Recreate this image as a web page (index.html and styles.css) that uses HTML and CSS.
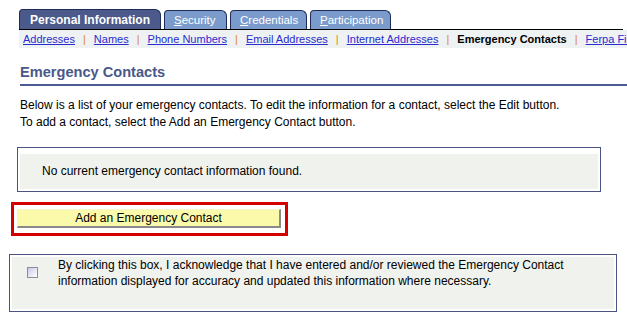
FILE: index.html
```html
<!DOCTYPE html>
<html>
<head>
<meta charset="utf-8">
<link rel="stylesheet" href="styles.css">
</head>
<body>
<div class="tabs">
  <div class="tab active">Personal Information</div>
  <div class="tab tab-security"><u>S</u>ecurity</div>
  <div class="tab tab-credentials"><u>C</u>redentials</div>
  <div class="tab tab-participation"><u>P</u>articipation</div>
</div>
<div class="subnav">
  <a href="#">Addresses</a><span class="sep">|</span><a href="#">Names</a><span class="sep">|</span><a href="#">Phone Numbers</a><span class="sep">|</span><a href="#">Email Addresses</a><span class="sep">|</span><a href="#">Internet Addresses</a><span class="sep">|</span><span class="current">Emergency Contacts</span><span class="sep">|</span><a href="#">Ferpa Find</a>
</div>
<h1 class="heading">Emergency Contacts</h1>
<p class="intro">Below is a list of your emergency contacts. To edit the information for a contact, select the Edit button.<br>To add a contact, select the Add an Emergency Contact button.</p>
<div class="box notice">
  <div class="box-inner notice-inner">No current emergency contact information found.</div>
</div>
<div class="highlight">
  <button class="add-btn">Add an Emergency Contact</button>
</div>
<div class="box ack">
  <div class="box-inner ack-inner">
    <span class="check"></span>
    <div class="ack-text">By clicking this box, I acknowledge that I have entered and/or reviewed the Emergency Contact<br>information displayed for accuracy and updated this information where necessary.</div>
  </div>
</div>
</body>
</html>
```

FILE: styles.css
```css
html, body {
  margin: 0;
  padding: 0;
  background: #fff;
}
body {
  width: 627px;
  height: 314px;
  overflow: hidden;
  font-family: "Liberation Sans", Arial, sans-serif;
  font-size: 12px;
  color: #000;
}
.tabs {
  display: flex;
  align-items: flex-end;
  gap: 3px;
  margin: 9px 4px 0 19px;
  height: 20px;
  border-bottom: 1px solid #000;
}
.tab {
  height: 19px;
  line-height: 19px;
  padding: 0 0 0 9px;
  border: 1px solid #1d2c58;
  border-bottom: none;
  border-radius: 4px 6px 0 0;
  background: #7a9bcb;
  color: #fff;
  font-size: 11.5px;
  box-sizing: border-box;
  white-space: nowrap;
  overflow: hidden;
}
.tab u {
  text-decoration: underline;
}
.tab.active {
  width: 142px;
  height: 20px;
  line-height: 20px;
  background: #4b598b;
  font-weight: bold;
  font-size: 12px;
  padding-left: 10px;
}
.tab-security { width: 63px; }
.tab-credentials { width: 77px; }
.tab-participation { width: 81px; }
.subnav {
  margin-left: 19px;
  height: 18px;
  line-height: 19px;
  background: #eef2f2;
  padding-left: 4px;
  font-size: 11px;
  white-space: nowrap;
  overflow: hidden;
}
.subnav a {
  color: #2b2bcf;
  text-decoration: underline;
}
.subnav .sep {
  color: #e0862c;
  margin: 0 8px;
}
.subnav .current {
  font-weight: bold;
  color: #000;
}
.heading {
  margin: 16px 0 0 20px;
  padding-bottom: 4px;
  font-size: 14.6px;
  line-height: 16px;
  font-weight: bold;
  color: #4a5888;
  border-bottom: 2px solid #4d5b94;
}
.intro {
  margin: 11px 0 0 20px;
  line-height: 17px;
}
.box {
  border: 1px solid #4a5384;
  padding: 2px;
  background: #fff;
}
.box-inner {
  background: #f0f2ee;
}
.notice {
  margin: 16px 0 0 17px;
  width: 578px;
  padding-top: 6px;
}
.notice-inner {
  height: 35px;
  line-height: 35px;
  padding-left: 22px;
}
.highlight {
  display: inline-block;
  margin: 10px 0 0 11px;
  border: 3px solid #d40000;
  padding: 4px 4px 5px 3px;
}
.add-btn {
  display: block;
  width: 264px;
  height: 19px;
  margin: 0;
  padding: 0;
  background: #fafaaa;
  border: none;
  border-top: 1px solid #f4f4d0;
  border-left: 1px solid #f4f4d0;
  border-right: 2px solid #8a8a8a;
  border-bottom: 2px solid #8a8a8a;
  font-family: "Liberation Sans", Arial, sans-serif;
  font-size: 12px;
  color: #000;
  box-sizing: border-box;
}
.ack {
  margin: 18px 0 0 9px;
  width: 602px;
}
.ack-inner {
  height: 52px;
  display: flex;
  align-items: flex-start;
  box-sizing: border-box;
}
.check {
  flex: none;
  width: 11px;
  height: 11px;
  margin: 10px 20px 0 15px;
  border: 1px solid #8c8c9a;
  background: linear-gradient(135deg, #c8c8e8 0%, #e6e6f4 50%, #ffffff 100%);
  box-sizing: border-box;
}
.ack-text {
  line-height: 16px;
}
```
